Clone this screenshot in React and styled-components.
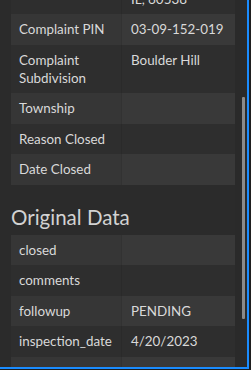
import React from "react";
import styled, { createGlobalStyle } from "styled-components";

const GlobalStyle = createGlobalStyle`
  html, body {
    margin: 0;
    padding: 0;
    background: #1f1f1f;
  }
  body {
    font-family: Lato, "Noto Sans", sans-serif;
  }
`;

const Frame = styled.div`
  box-sizing: border-box;
  width: 249px;
  height: 369px;
  display: flex;
  background: #2b2b2b;
  border-right: 2px solid #1a8cff;
  border-bottom: 2px solid #1a8cff;
  overflow: hidden;
`;

const Viewport = styled.div`
  flex: 1;
  min-width: 0;
  overflow: hidden;
  padding-left: 11px;
`;

const Content = styled.div`
  margin-top: -16.5px;
  width: 224px;
`;

const Gutter = styled.div`
  width: 12px;
  flex: none;
  box-sizing: border-box;
  padding: 97px 2px 0 7px;
  background: #2a2a2a;
`;

const Thumb = styled.div`
  width: 3px;
  height: 222px;
  border-radius: 1px;
  background: #8a8a8a;
`;

const Table = styled.div`
  display: flex;
  flex-direction: column;
`;

const Row = styled.div`
  display: grid;
  grid-template-columns: 111px 1fr;
  background: ${(p) => (p.$shade ? "#363636" : "#2e2e2e")};
`;

const Label = styled.div`
  box-sizing: border-box;
  padding: 6.25px 4px 6.25px 8px;
  font-size: 13.4px;
  line-height: 18px;
  color: #d9d9d9;
  border-right: 1px solid rgba(0, 0, 0, 0.07);
  white-space: ${(p) => (p.$wrap ? "normal" : "nowrap")};
  overflow: hidden;
`;

const Value = styled.div`
  box-sizing: border-box;
  padding: 6.25px 4px 6.25px 9px;
  font-size: 13.4px;
  line-height: 18px;
  color: #d9d9d9;
  white-space: nowrap;
  overflow: hidden;
  background: ${(p) => (p.$shade ? "rgba(255,255,255,0.015)" : "transparent")};
`;

const Heading = styled.h2`
  margin: 19px 0 5px;
  font-size: 20.5px;
  line-height: 26px;
  font-weight: 400;
  color: #d2d2d2;
`;

const details = [
  ["", "IL, 60538"],
  ["Complaint PIN", "03-09-152-019"],
  ["Complaint Subdivision", "Boulder Hill"],
  ["Township", ""],
  ["Reason Closed", ""],
  ["Date Closed", ""],
];

const original = [
  ["closed", ""],
  ["comments", ""],
  ["followup", "PENDING"],
  ["inspection_date", "4/20/2023"],
  ["original_complaint", "Loose dog left"],
];

function DataTable({ rows, startShade }) {
  return (
    <Table>
      {rows.map(([k, v], i) => {
        const shade = (i % 2 === 0) === startShade;
        return (
          <Row key={i} $shade={shade}>
            <Label $wrap={k.includes(" ") && k.length > 14}>{k}</Label>
            <Value $shade={shade}>{v}</Value>
          </Row>
        );
      })}
    </Table>
  );
}

export default function App() {
  return (
    <>
      <GlobalStyle />
      <Frame>
        <Viewport>
          <Content>
            <DataTable rows={details} startShade={false} />
            <Heading>Original Data</Heading>
            <DataTable rows={original} startShade={true} />
          </Content>
        </Viewport>
        <Gutter>
          <Thumb />
        </Gutter>
      </Frame>
    </>
  );
}
